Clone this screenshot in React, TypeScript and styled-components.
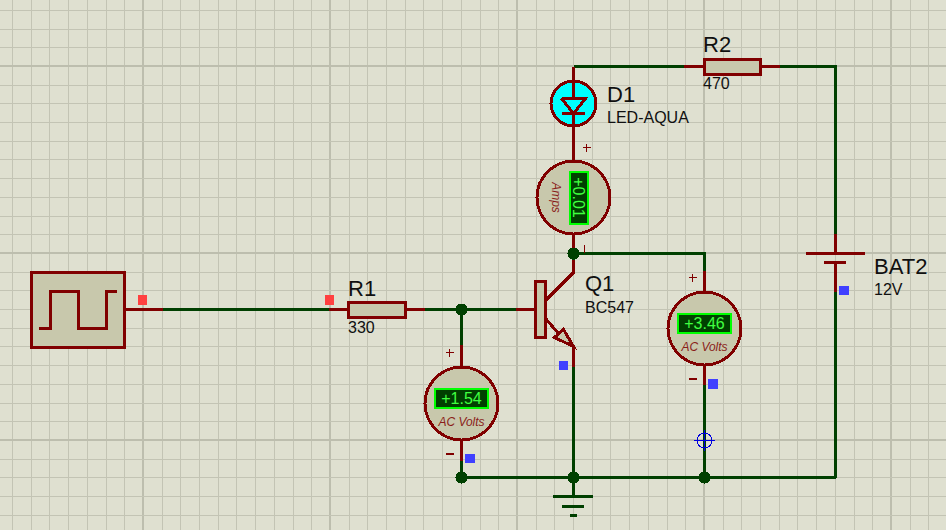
import React from "react";
import styled, { createGlobalStyle } from "styled-components";

const GlobalStyle = createGlobalStyle`
  html, body {
    margin: 0;
    padding: 0;
    background: #dfe0d0;
    overflow: hidden;
  }
`;

const Sheet = styled.div`
  width: 946px;
  height: 530px;
  overflow: hidden;
  background: #dfe0d0;
  font-family: "Liberation Sans", Arial, sans-serif;
`;

const Schematic = styled.svg`
  display: block;
  shape-rendering: crispEdges;
`;

const GridLine = styled.line<{ $major: boolean }>`
  stroke: ${(p) => (p.$major ? "#bdbeae" : "#c3c4b4")};
  stroke-width: ${(p) => (p.$major ? 2 : 1)}px;
`;

const Wire = styled.polyline`
  fill: none;
  stroke: #004000;
  stroke-width: 3px;
`;

const Pin = styled.polyline`
  fill: none;
  stroke: #800000;
  stroke-width: 3px;
`;

const Body = styled.rect`
  fill: #c8c8ac;
  stroke: #800000;
  stroke-width: 3px;
`;

const Arrow = styled.polygon`
  fill: #c8c8ac;
  stroke: #800000;
  stroke-width: 3px;
`;

const Dial = styled.circle<{ $led?: boolean }>`
  fill: ${(p) => (p.$led ? "#00ffff" : "#c8c8ac")};
  stroke: #800000;
  stroke-width: 3px;
`;

const Junction = styled.circle`
  fill: #004000;
`;

const Marker = styled.rect<{ $logic: "high" | "low" }>`
  fill: ${(p) => (p.$logic === "high" ? "#ff4040" : "#4040ff")};
`;

const Display = styled.rect`
  fill: #004000;
  stroke: #00ff00;
  stroke-width: 2px;
`;

const Reading = styled.text`
  fill: #40ff40;
  font-size: 16px;
  text-anchor: middle;
`;

const Unit = styled.text`
  fill: #800000;
  font-size: 12px;
  font-style: italic;
  text-anchor: middle;
  opacity: 0.85;
`;

const Polarity = styled.line`
  stroke: #800000;
  stroke-width: 1px;
`;

const RefLabel = styled.text`
  fill: #101010;
  font-size: 22px;
`;

const ValueLabel = styled.text`
  fill: #101010;
  font-size: 16px;
`;

const ProbeRing = styled.circle`
  fill: none;
  stroke: #0000e0;
  stroke-width: 1px;
`;

const ProbeCross = styled.line`
  stroke: #0000e0;
  stroke-width: 1px;
`;

const range = (n: number) => Array.from({ length: n }, (_, i) => i);

const Grid = () => {
  const xs = range(52).map((i) => ({ at: 142.9 + (i - 7) * 18.7, major: (i - 7) % 10 === 0 }));
  const ys = range(30).map((i) => ({ at: 65.9 + (i - 3) * 18.7, major: (i - 3) % 10 === 0 }));
  return (
    <g>
      {xs.map((l) => {
        const x = l.major ? Math.round(l.at) : Math.round(l.at) + 0.5;
        return <GridLine key={"x" + l.at} $major={l.major} x1={x} x2={x} y1={0} y2={530} />;
      })}
      {ys.map((l) => {
        const y = l.major ? Math.round(l.at) : Math.round(l.at) + 0.5;
        return <GridLine key={"y" + l.at} $major={l.major} y1={y} y2={y} x1={0} x2={946} />;
      })}
    </g>
  );
};

interface MeterProps {
  cx: number;
  cy: number;
  value: string;
}

const VoltMeter = ({ cx, cy, value }: MeterProps) => (
  <g>
    <Dial cx={cx} cy={cy} r={36.5} />
    <Display x={cx - 26.5} y={cy - 15} width={53} height={19} />
    <Reading x={cx} y={cy + 0.5}>{value}</Reading>
    <Unit x={cx} y={cy + 22}>AC Volts</Unit>
    <Polarity x1={cx - 16} x2={cx - 8} y1={cy - 51} y2={cy - 51} />
    <Polarity x1={cx - 12} x2={cx - 12} y1={cy - 55} y2={cy - 47} />
    <Polarity x1={cx - 16} x2={cx - 8} y1={cy + 50} y2={cy + 50} />
    <Polarity x1={cx - 16} x2={cx - 8} y1={cy + 51} y2={cy + 51} />
  </g>
);

const AmpMeter = ({ cx, cy, value }: MeterProps) => (
  <g>
    <Dial cx={cx} cy={cy} r={36.5} />
    <Display x={cx - 4} y={cy - 26} width={18} height={52} />
    <Reading transform={`translate(${cx - 1} ${cy}) rotate(90)`}>{value}</Reading>
    <Unit transform={`translate(${cx - 22} ${cy}) rotate(90)`}>Amps</Unit>
    <Polarity x1={cx + 9} x2={cx + 17} y1={cy - 50} y2={cy - 50} />
    <Polarity x1={cx + 13} x2={cx + 13} y1={cy - 54} y2={cy - 46} />
    <Polarity x1={cx + 11} x2={cx + 11} y1={cy + 47} y2={cy + 55} />
  </g>
);

const wires = [
  "163,309.5 329,309.5",
  "425,309.5 516,309.5",
  "461.5,309.5 461.5,345",
  "461.5,461 461.5,477.5",
  "461.5,477.5 835.5,477.5",
  "573.5,367 573.5,477.5",
  "573.5,477.5 573.5,496",
  "573.5,248 573.5,260",
  "573.5,253.5 704.5,253.5 704.5,271",
  "704.5,385 704.5,477.5",
  "573.5,66.5 684,66.5",
  "780,66.5 835.5,66.5 835.5,234",
  "835.5,292 835.5,477.5",
  "553,496.5 593,496.5",
  "562,506.5 584,506.5",
  "570,515.5 577,515.5",
];

const pins = [
  "126,309.5 163,309.5",
  "329,309.5 348,309.5",
  "406,309.5 425,309.5",
  "516,309.5 535,309.5",
  "684,66.5 704,66.5",
  "760,66.5 780,66.5",
  "461.5,345 461.5,366",
  "461.5,441 461.5,461",
  "704.5,271 704.5,291",
  "704.5,366 704.5,385",
  "573.5,67 573.5,80",
  "573.5,127 573.5,160",
  "573.5,235 573.5,248",
  "573.5,260 573.5,272.5 546,300",
  "546,319 558,333",
  "573.5,346.5 573.5,367",
  "835.5,234 835.5,253",
  "806,253.5 865,253.5",
  "824,262.5 846,262.5",
  "835.5,262 835.5,292",
];

const markers: { x: number; y: number; w: number; h: number; logic: "high" | "low" }[] = [
  { x: 138, y: 295, w: 9, h: 10, logic: "high" },
  { x: 325, y: 295, w: 9, h: 10, logic: "high" },
  { x: 559, y: 361, w: 9, h: 9, logic: "low" },
  { x: 465, y: 454, w: 10, h: 9, logic: "low" },
  { x: 708, y: 379, w: 10, h: 10, logic: "low" },
  { x: 839, y: 286, w: 10, h: 9, logic: "low" },
];

const junctions = [
  [461.5, 309.5],
  [461.5, 477.5],
  [573.5, 477.5],
  [704.5, 477.5],
  [573.5, 253.5],
];

export default function App() {
  return (
    <Sheet>
      <GlobalStyle />
      <Schematic width={946} height={530} viewBox="0 0 946 530">
        <Grid />

        {wires.map((w) => (
          <Wire key={w} points={w} />
        ))}
        {pins.map((p) => (
          <Pin key={p} points={p} />
        ))}
        {junctions.map(([x, y]) => (
          <Junction key={`${x}-${y}`} cx={x} cy={y} r={6} />
        ))}

        {/* pulse generator */}
        <Body x={31.5} y={272.5} width={93} height={75} />
        <Pin points="39,328.5 50.5,328.5 50.5,291.5 78.5,291.5 78.5,328.5 106.5,328.5 106.5,291.5 117,291.5" />

        {/* resistors */}
        <Body x={348.5} y={302.5} width={57} height={15} />
        <Body x={704.5} y={59.5} width={56} height={15} />

        {/* transistor */}
        <Body x={535.5} y={281.5} width={10} height={56} />
        <Arrow points="563.5,329.5 554.5,337.5 573.5,346.5" />

        {/* led */}
        <Dial $led cx={573.5} cy={103.5} r={22.5} />
        <Pin points="561.5,98.5 585.5,98.5 573.5,113.5 561.5,98.5" />
        <Pin points="562,113.5 585,113.5" />
        <Pin points="573.5,80 573.5,98" />
        <Pin points="573.5,113 573.5,127" />

        <AmpMeter cx={573.5} cy={197.5} value="+0.01" />
        <VoltMeter cx={461.5} cy={403.5} value="+1.54" />
        <VoltMeter cx={704.5} cy={328.5} value="+3.46" />

        {markers.map((m) => (
          <Marker key={`${m.x}-${m.y}`} $logic={m.logic} x={m.x} y={m.y} width={m.w} height={m.h} />
        ))}

        {/* probe cursor */}
        <ProbeRing cx={704.5} cy={440.5} r={7.5} />
        <ProbeCross x1={694} x2={715} y1={440.5} y2={440.5} />
        <ProbeCross x1={704.5} x2={704.5} y1={430} y2={451} />

        <RefLabel x={348} y={296}>R1</RefLabel>
        <ValueLabel x={348} y={333}>330</ValueLabel>
        <RefLabel x={703} y={52}>R2</RefLabel>
        <ValueLabel x={703} y={89}>470</ValueLabel>
        <RefLabel x={607} y={102}>D1</RefLabel>
        <ValueLabel x={607} y={123}>LED-AQUA</ValueLabel>
        <RefLabel x={585} y={291}>Q1</RefLabel>
        <ValueLabel x={585} y={313}>BC547</ValueLabel>
        <RefLabel x={874} y={274}>BAT2</RefLabel>
        <ValueLabel x={874} y={295}>12V</ValueLabel>
      </Schematic>
    </Sheet>
  );
}
